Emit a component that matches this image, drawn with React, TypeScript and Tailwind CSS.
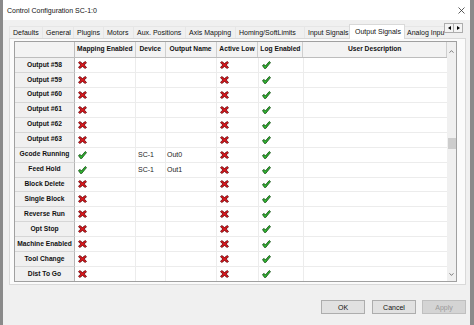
import React from "react";

const FONT = { fontFamily: '"Liberation Sans", Arial, sans-serif' };

const RedX = () => (
  <svg width="9" height="8" viewBox="0 0 9 8" className="block">
    <path
      d="M0.5 1.7 L1.7 0.5 L4.5 2.5 L7.3 0.5 L8.5 1.7 L6.2 4 L8.5 6.3 L7.3 7.5 L4.5 5.5 L1.7 7.5 L0.5 6.3 L2.8 4 Z"
      fill="#d8161c"
      stroke="#5a0206"
      strokeWidth="0.8"
      strokeLinejoin="round"
    />
  </svg>
);

const Check = () => (
  <svg width="9" height="8" viewBox="0 0 9 8" className="block">
    <path
      d="M0.5 4.6 L2.1 3.4 L3.4 5 L7.3 0.5 L8.5 1.6 L3.6 7.6 L2.6 7.6 Z"
      fill="#2fb52f"
      stroke="#0c450c"
      strokeWidth="0.8"
      strokeLinejoin="round"
    />
  </svg>
);

type Row = { name: string; me: boolean; dev: string; out: string };

const rows: Row[] = [
  { name: "Output #58", me: false, dev: "", out: "" },
  { name: "Output #59", me: false, dev: "", out: "" },
  { name: "Output #60", me: false, dev: "", out: "" },
  { name: "Output #61", me: false, dev: "", out: "" },
  { name: "Output #62", me: false, dev: "", out: "" },
  { name: "Output #63", me: false, dev: "", out: "" },
  { name: "Gcode Running", me: true, dev: "SC-1", out: "Out0" },
  { name: "Feed Hold", me: true, dev: "SC-1", out: "Out1" },
  { name: "Block Delete", me: false, dev: "", out: "" },
  { name: "Single Block", me: false, dev: "", out: "" },
  { name: "Reverse Run", me: false, dev: "", out: "" },
  { name: "Opt Stop", me: false, dev: "", out: "" },
  { name: "Machine Enabled", me: false, dev: "", out: "" },
  { name: "Tool Change", me: false, dev: "", out: "" },
  { name: "Dist To Go", me: false, dev: "", out: "" },
];

const tabs = [
  { label: "Defaults", w: "w-[33px]" },
  { label: "General", w: "w-[31px]" },
  { label: "Plugins", w: "w-[30px]" },
  { label: "Motors", w: "w-[30px]" },
  { label: "Aux. Positions", w: "w-[52px]" },
  { label: "Axis Mapping", w: "w-[50px]" },
  { label: "Homing/SoftLimits", w: "w-[69px]" },
  { label: "Input Signals", w: "w-[45px]" },
];

export default function App() {
  return (
    <div className="w-[474px] h-[325px] flex bg-[#8a8a8a] overflow-hidden text-black" style={FONT}>
      <div className="w-[3px] shrink-0" />
      <div className="w-[467px] shrink-0 h-full bg-[#f0f0f0] flex flex-col">
        {/* Title bar */}
        <div className="h-[20px] bg-white flex items-center justify-between pl-[4px] pr-[5px]">
          <span className="text-[7px] leading-none text-[#111]">Control Configuration SC-1:0</span>
          <svg width="7" height="7" viewBox="0 0 7 7">
            <path d="M0.5 0.5 L6.5 6.5 M6.5 0.5 L0.5 6.5" stroke="#333" strokeWidth="0.8" />
          </svg>
        </div>

        {/* Tabs row */}
        <div className="h-[18px] ml-[6px] mr-[4px] flex items-end relative z-10">
          {tabs.map((t) => (
            <div
              key={t.label}
              className={`${t.w} h-[12px] shrink-0 flex items-center pl-[3px] text-[7px] leading-none whitespace-nowrap border-t border-l border-[#e6e6e6] bg-[#f0f0f0] text-[#111]`}
            >
              {t.label}
            </div>
          ))}
          <div className="w-[56px] h-[15px] -mb-[1px] shrink-0 flex items-center pl-[5px] pb-[2px] text-[7px] leading-none whitespace-nowrap bg-white border border-b-0 border-[#d9d9d9] text-[#111]">
            Output Signals
          </div>
          <div className="w-[39px] h-[12px] shrink-0 flex items-center pl-[2px] text-[7px] leading-none whitespace-nowrap border-t border-[#e6e6e6] bg-[#f0f0f0] text-[#111]">
            Analog Inpu
          </div>
          <div className="self-start mt-[3px] flex">
            <div className="w-[10px] h-[10px] bg-[#f4f4f4] border border-[#adadad] flex items-center justify-center">
              <svg width="3" height="4" viewBox="0 0 3 4"><path d="M3 0 L0 2 L3 4 Z" fill="#000" /></svg>
            </div>
            <div className="w-[9px] h-[10px] bg-[#f4f4f4] border border-l-0 border-[#adadad] flex items-center justify-center">
              <svg width="3" height="4" viewBox="0 0 3 4"><path d="M0 0 L3 2 L0 4 Z" fill="#000" /></svg>
            </div>
          </div>
        </div>

        {/* Tab panel */}
        <div className="h-[247px] ml-[6px] mr-[4px] border border-[#d9d9d9] bg-[#fbfbfb] pl-[4px] pr-[8px] pt-[2px] pb-[2px] flex">
          <div className="flex-1 border border-[#a0a0a0] bg-white flex overflow-hidden">
            <div className="flex-1 flex flex-col overflow-hidden">
              {/* header */}
              <div className="h-[16px] shrink-0 flex bg-[#f3f3f3] border-b border-[#bdbdbd] text-[6.7px] font-bold leading-none text-[#111]">
                <div className="w-[60px] border-r border-[#bdbdbd]" />
                <div className="w-[61px] flex items-center justify-center border-r border-[#cfcfcf]">Mapping Enabled</div>
                <div className="w-[30px] flex items-center justify-center border-r border-[#cfcfcf]">Device</div>
                <div className="w-[51px] flex items-center justify-center border-r border-[#cfcfcf]">Output Name</div>
                <div className="w-[42px] flex items-center justify-center border-r border-[#cfcfcf]">Active Low</div>
                <div className="w-[45px] flex items-center justify-center border-r border-[#cfcfcf]">Log Enabled</div>
                <div className="w-[144px] flex items-center justify-center border-r border-[#cfcfcf]">User Description</div>
              </div>
              {rows.map((r) => (
                <div key={r.name} className="h-[14.95px] shrink-0 flex">
                  <div className="w-[60px] shrink-0 bg-[#f0f0f0] border-r border-[#b5b5b5] border-b border-b-[#d6d6d6] flex items-center justify-center text-[6.7px] font-bold leading-none text-[#111] whitespace-nowrap">
                    {r.name}
                  </div>
                  <div className="w-[61px] shrink-0 border-r border-b border-[#ececec] flex items-center pl-[3px]">
                    {r.me ? <Check /> : <RedX />}
                  </div>
                  <div className="w-[30px] shrink-0 border-r border-b border-[#ececec] flex items-center pl-[2px] text-[7px] leading-none text-[#222]">
                    {r.dev}
                  </div>
                  <div className="w-[51px] shrink-0 border-r border-b border-[#ececec] flex items-center pl-[1px] text-[7px] leading-none text-[#222]">
                    {r.out}
                  </div>
                  <div className="w-[42px] shrink-0 border-r border-b border-[#ececec] flex items-center pl-[3px]">
                    <RedX />
                  </div>
                  <div className="w-[45px] shrink-0 border-r border-b border-[#ececec] flex items-center pl-[3px]">
                    <Check />
                  </div>
                  <div className="w-[144px] shrink-0 border-r border-b border-[#ececec]" />
                </div>
              ))}
            </div>
            {/* scrollbar */}
            <div className="w-[9px] shrink-0 bg-[#f0f0f0] flex flex-col items-center">
              <div className="h-[16px] w-full flex items-center justify-center pt-[2px]">
                <svg width="5" height="3" viewBox="0 0 5 3"><path d="M0.5 2.7 L2.5 0.6 L4.5 2.7" stroke="#606060" strokeWidth="0.8" fill="none" /></svg>
              </div>
              <div className="h-[80px]" />
              <div className="w-[8px] h-[11px] bg-[#cdcdcd]" />
              <div className="flex-1" />
              <div className="h-[14px] w-full flex items-center justify-center">
                <svg width="5" height="3" viewBox="0 0 5 3"><path d="M0.5 0.3 L2.5 2.4 L4.5 0.3" stroke="#606060" strokeWidth="0.8" fill="none" /></svg>
              </div>
            </div>
          </div>
        </div>

        {/* Buttons */}
        <div className="mt-[15px] mr-[4px] flex justify-end text-[7px] leading-none">
          <div className="w-[44px] h-[14px] bg-[#e1e1e1] border border-[#adadad] flex items-center justify-center text-[#111]">OK</div>
          <div className="w-[44px] h-[14px] ml-[7px] bg-[#e1e1e1] border border-[#adadad] flex items-center justify-center text-[#111]">Cancel</div>
          <div className="w-[44px] h-[14px] ml-[6px] bg-[#d4d4d4] border border-[#bfbfbf] flex items-center justify-center text-[#9a9a9a]">Apply</div>
        </div>
      </div>
      <div className="flex-1" />
    </div>
  );
}
